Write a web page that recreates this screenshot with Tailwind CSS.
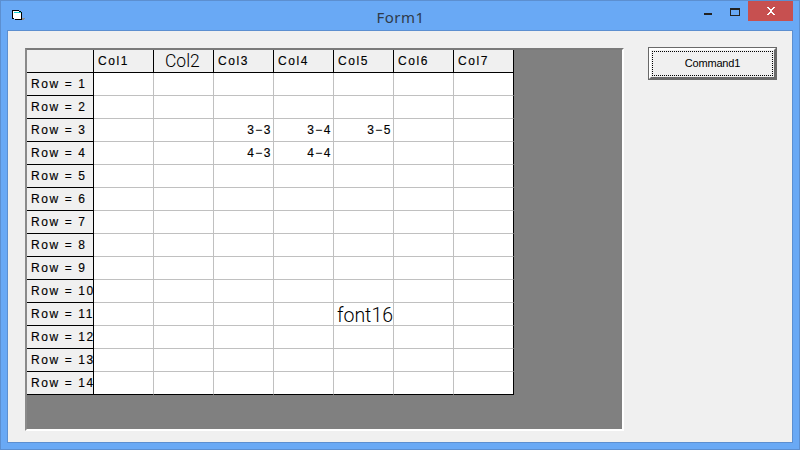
<!DOCTYPE html>
<html lang="en">
  <head>
    <meta charset="UTF-8" />
    <title>Form1</title>
    <script src="https://cdn.jsdelivr.net/npm/@tailwindcss/browser@4"></script>
  </head>
  <body class="w-[800px] h-[450px] overflow-hidden bg-[#69a9f5] font-['Liberation_Sans',sans-serif] text-black">
    <!-- Window frame -->
    <div class="w-[800px] h-[450px] flex flex-col border border-[#5c8fd0]">
      <!-- Title bar -->
      <div class="h-[29px] flex items-start shrink-0">
        <svg class="ml-[11px] mt-[9px] w-[14px] h-[12px] shrink-0" viewBox="0 0 14 12" shape-rendering="crispEdges">
          <path d="M0 0h7v1h2v1h1v8H3V9H0z" fill="#000" />
          <path d="M1 1h6v1H1z" fill="#fff" />
          <path d="M2 2h7v1H2z" fill="#19d6d6" />
          <path d="M1 2h1v6H1zM2 3h7v6H2z" fill="#fff" />
          <path d="M10 8h3v1h-1v1h-2z" fill="#8a8a8a" />
        </svg>
        <div class="flex-1 text-center text-[15px] tracking-[0.5px] leading-[18px] mt-[7px] ml-[94px] text-[#2f3b4a] font-['Noto_Sans',sans-serif]">Form1</div>
        <div class="flex items-start h-[20px] w-[112px] shrink-0 mr-[6px]">
          <div class="w-[34px] h-[20px] flex justify-end pr-[3px]"><div class="w-[8px] h-[2px] mt-[12px] bg-[#222]"></div></div>
          <div class="w-[26px] h-[20px] flex justify-end pr-[1px]"><div class="w-[10px] h-[8px] mt-[7px] border border-t-2 border-[#222]"></div></div>
          <div class="w-[45px] h-[20px] ml-[7px] bg-[#c75050] flex items-center justify-center text-white">
            <svg class="w-[8px] h-[8px]" viewBox="0 0 8 8" shape-rendering="crispEdges"><path d="M0 0h2v1h1v1h2V1h1V0h2v1H7v1H6v1H5v2h1v1h1v1h1v1H6V7H5V6H3v1H2v1H0V7h1V6h1V5h1V3H2V2H1V1H0z" fill="#fff" /></svg>
          </div>
        </div>
      </div>

      <!-- Client area -->
      <div class="ml-[6px] w-[786px] h-[413px] bg-[#f0f0f0] border border-[#5c8fd0] flex items-start pl-[17px] pt-[17px]">
        <!-- Grid control -->
        <div class="w-[599px] h-[383px] shrink-0 bg-[#808080] border-2 border-t-[#7a7a7a] border-l-[#8a8a8a] border-r-white border-b-white">
          <div id="grid" class="grid grid-cols-[67px_repeat(7,60px)] grid-rows-[23px_repeat(14,23px)] w-[487px] text-[12px] tracking-[1.6px] [-webkit-text-stroke:0.15px_black] font-['Liberation_Sans',sans-serif]"></div>
        </div>
        <!-- Command button -->
        <button class="ml-[24px] mt-[-1px] w-[129px] h-[33px] shrink-0 border border-[#696969] bg-[#f0f0f0] text-[11px] tracking-[-0.2px] font-['Liberation_Sans',sans-serif]">
          <span class="block w-full h-full border-2 border-t-white border-l-white border-r-[#696969] border-b-[#696969] p-[1px]">
            <span class="flex items-center justify-center w-full h-full border border-dotted border-black">Command1</span>
          </span>
        </button>
      </div>
    </div>

    <script>
      const grid = document.getElementById("grid");
      const cols = ["", "Col1", "Col2", "Col3", "Col4", "Col5", "Col6", "Col7"];
      const values = { "3-3": "3−3", "3-4": "3−4", "3-5": "3−5", "4-3": "4−3", "4-4": "4−4" };

      function addCell(cls, text) {
        const div = document.createElement("div");
        div.className = cls;
        div.textContent = text;
        grid.appendChild(div);
        return div;
      }

      cols.forEach((name, i) => {
        const cell = addCell("bg-[#f0f0f0] border-r border-b border-black pl-[4px] leading-[23px] overflow-hidden whitespace-nowrap", name);
        if (i === 2) {
          cell.className = "bg-[#f0f0f0] border-r border-b border-black pl-[11px] text-[17.5px] tracking-normal leading-[23px] overflow-hidden whitespace-nowrap font-['Roboto',sans-serif] font-light [-webkit-text-stroke:0]";
        }
      });

      for (let r = 1; r <= 14; r++) {
        addCell("bg-[#f0f0f0] border-r border-b border-black pl-[4px] leading-[23px] overflow-hidden whitespace-nowrap", "Row = " + r);
        for (let c = 1; c <= 7; c++) {
          const text = values[r + "-" + c] || "";
          let cell;
          if (r === 11 && c === 5) {
            cell = addCell("bg-white border-b border-r border-[#c0c0c0] pl-[3px] text-[19.5px] tracking-normal leading-[25px] font-['Roboto',sans-serif] font-light [-webkit-text-stroke:0] overflow-hidden whitespace-nowrap", "font16");
          } else {
            cell = addCell("bg-white border-b border-r border-[#c0c0c0] pr-[1px] text-right tracking-[1.5px] leading-[23px]", text);
          }
          if (r === 14) cell.classList.add("border-b-black");
          if (c === 7) cell.classList.add("border-r-black");
        }
      }
    </script>
  </body>
</html>
